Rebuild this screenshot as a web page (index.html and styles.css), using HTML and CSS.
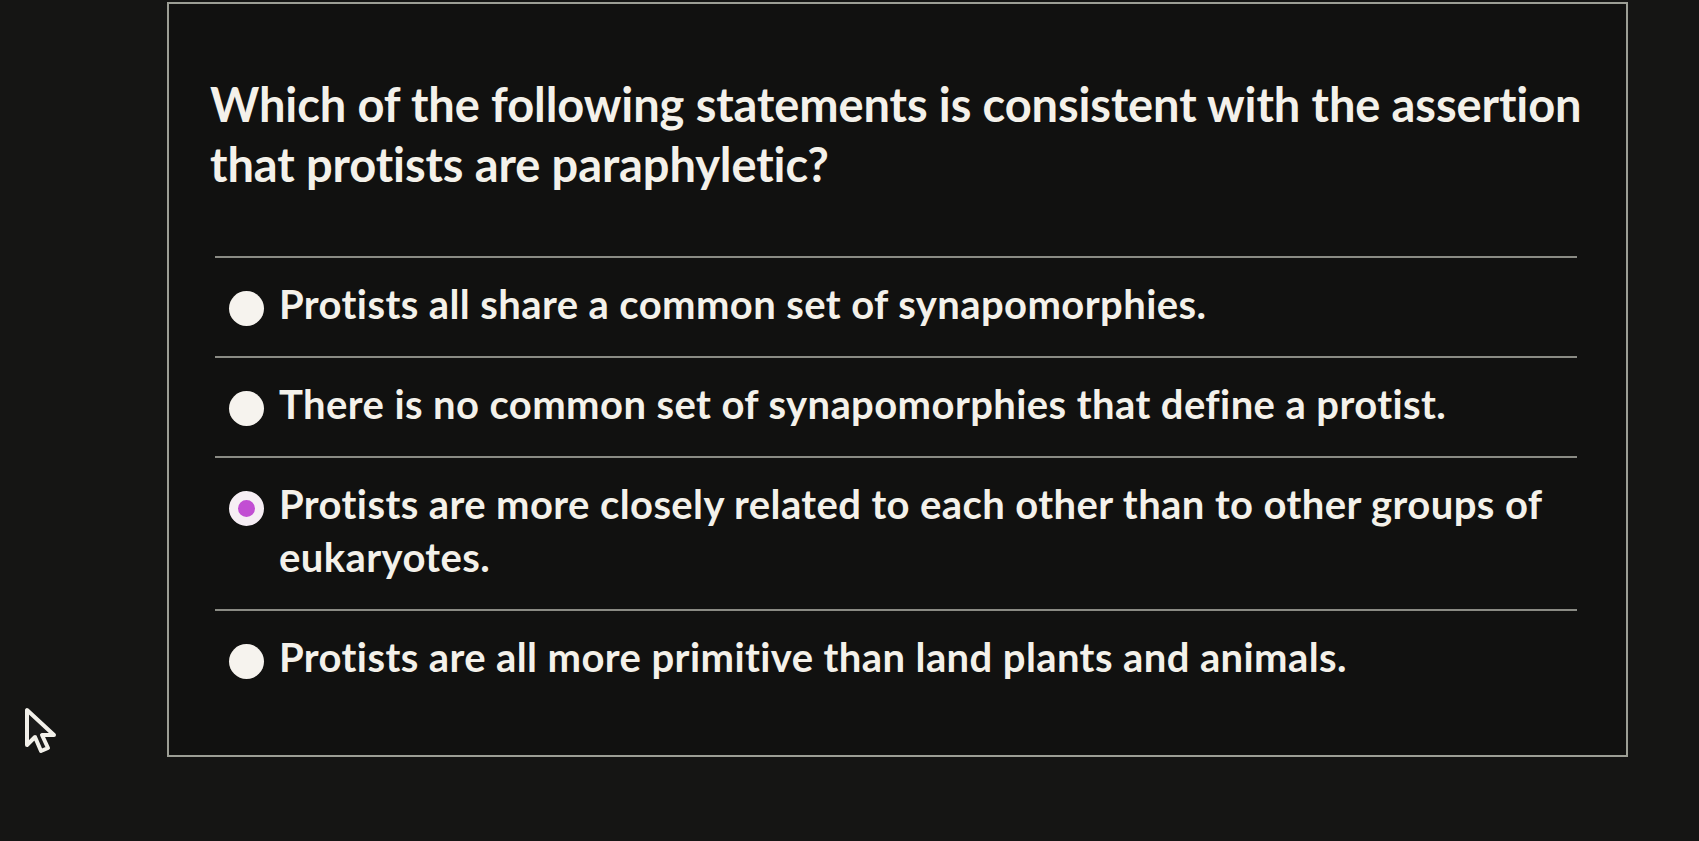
FILE: index.html
```html
<!DOCTYPE html>
<html lang="en">
<head>
<meta charset="utf-8">
<title>Quiz question</title>
<link rel="stylesheet" href="styles.css">
</head>
<body>
<div class="screen">
  <section class="card">
    <h1 class="question">Which of the following statements is consistent with the assertion that protists are paraphyletic?</h1>
    <ul class="options">
      <li class="option"><span class="radio"></span><span class="label">Protists all share a common set of synapomorphies.</span></li>
      <li class="option"><span class="radio"></span><span class="label">There is no common set of synapomorphies that define a protist.</span></li>
      <li class="option"><span class="radio checked"></span><span class="label">Protists are more closely related to each other than to other groups of eukaryotes.</span></li>
      <li class="option"><span class="radio"></span><span class="label">Protists are all more primitive than land plants and animals.</span></li>
    </ul>
  </section>
  <svg class="cursor" width="40" height="50" viewBox="0 0 40 50" aria-hidden="true">
    <path d="M4 3 L4 38 L12 30 L18 44 L25 41 L19 28 L31 28 Z" fill="#1a1a1a" stroke="#f2f0ea" stroke-width="4" stroke-linejoin="round"/>
  </svg>
</div>
</body>
</html>
```

FILE: styles.css
```css
html, body {
  margin: 0;
  padding: 0;
  background: #151514;
}

.screen {
  position: relative;
  width: 1699px;
  height: 841px;
  overflow: hidden;
  padding-top: 2px;
  box-sizing: border-box;
}

.card {
  margin-left: 167px;
  width: 1461px;
  height: 755px;
  box-sizing: border-box;
  border: 2px solid #9c9e95;
  background: #111110;
  padding: 70px 0 0 41px;
  font-family: "Lato", "Open Sans", sans-serif;
  font-weight: 700;
  color: #f4f1ea;
  font-variant-ligatures: none;
}

.question {
  margin: 0;
  max-width: 1390px;
  font-size: 47px;
  line-height: 60px;
  font-weight: 700;
  letter-spacing: -0.1px;
}

.options {
  list-style: none;
  margin: 62px 0 0 5px;
  padding: 0;
  width: 1362px;
  border-top: 2px solid #8a8b84;
}

.option {
  display: flex;
  align-items: flex-start;
  gap: 15px;
  padding: 20px 0 25px 14px;
  border-bottom: 2px solid #8a8b84;
  font-size: 40px;
  line-height: 53px;
  letter-spacing: 0.4px;
}

.option:last-child {
  border-bottom: none;
}

.label {
  max-width: 1300px;
}

.radio {
  flex: none;
  width: 35px;
  height: 35px;
  margin-top: 13px;
  border-radius: 50%;
  background: #f6f3ee;
  box-sizing: border-box;
}

.radio.checked {
  background: #c24ed3;
  border: 9px solid #f6eef4;
}

.cursor {
  position: absolute;
  left: 23px;
  top: 707px;
}
```
